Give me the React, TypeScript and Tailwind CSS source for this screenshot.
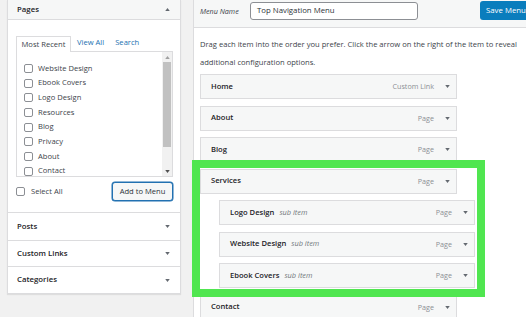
import React from 'react';

const pages = ['Website Design', 'Ebook Covers', 'Logo Design', 'Resources', 'Blog', 'Privacy', 'About', 'Contact'];

const menuTop = [
  { title: 'Home', type: 'Custom Link' },
  { title: 'About', type: 'Page' },
  { title: 'Blog', type: 'Page' },
  { title: 'Services', type: 'Page' },
];

const subItems = ['Logo Design', 'Website Design', 'Ebook Covers'];

function Arrow({ up = false }: { up?: boolean }) {
  return (
    <svg width="5" height="3" viewBox="0 0 6 4" className="shrink-0">
      <polygon points={up ? '0,4 6,4 3,0' : '0,0 6,0 3,4'} fill="#646970" />
    </svg>
  );
}

function Checkbox() {
  return <span className="w-[9px] h-[9px] rounded-[2px] border border-[#8c8f94] bg-white shrink-0" />;
}

function MenuItem({ title, type, sub = false }: { title: string; type: string; sub?: boolean }) {
  return (
    <div
      className={`h-[25px] shrink-0 flex items-center border border-[#dcdcde] bg-[#f6f7f7] pl-[10px] pr-[6px] ${
        sub ? 'ml-[19px] w-[256px]' : 'w-[257px]'
      }`}
    >
      <span className="text-[7.6px] font-semibold text-[#1d2327]">{title}</span>
      {sub && <span className="ml-[5px] text-[7.4px] italic text-[#72777c]">sub item</span>}
      <span className="ml-auto text-[7.2px] text-[#8c8f94]">{type}</span>
      <span className="ml-[11px] flex items-center">
        <Arrow />
      </span>
    </div>
  );
}

function Section({ title, h }: { title: string; h: string }) {
  return (
    <div className={`${h} border-t border-[#dcdcde] flex items-center justify-between pl-[9px] pr-[10px]`}>
      <span className="text-[7.8px] font-semibold text-[#1d2327]">{title}</span>
      <Arrow />
    </div>
  );
}

export default function App() {
  return (
    <div className="relative w-[526px] h-[317px] overflow-hidden bg-[#f1f1f1] flex font-['Open_Sans',sans-serif] text-[#3c434a]">
      {/* Left column */}
      <div className="pl-[7px] w-[181px] shrink-0">
        <div className="w-[174px] bg-white border border-t-0 border-[#dcdcde] shadow-[0_1px_1px_rgba(0,0,0,0.08)]">
          <div className="h-[20px] bg-[#f6f7f7] border-b border-[#dcdcde] flex items-center justify-between pl-[9px] pr-[10px]">
            <span className="text-[7.8px] font-semibold text-[#1d2327]">Pages</span>
            <Arrow up />
          </div>

          <div className="pt-[15px] pl-[8px] pr-[7px] pb-[11px]">
            {/* Tabs */}
            <div className="flex items-end h-[16px]">
              <div className="h-[16px] w-[55px] border border-b-0 border-[#dcdcde] bg-white relative top-[1px] flex items-center justify-center text-[7.6px] text-[#3c434a]">
                Most Recent
              </div>
              <span className="ml-[6px] pb-[3px] text-[7.6px] text-[#2271b1]">View All</span>
              <span className="ml-[11px] pb-[3px] text-[7.6px] text-[#2271b1]">Search</span>
            </div>

            {/* List box */}
            <div className="h-[126px] border border-[#dcdcde] bg-white flex overflow-hidden">
              <div className="flex-1 pt-[9px] pl-[7px]">
                {pages.map((p) => (
                  <div key={p} className="h-[14.7px] flex items-center gap-[5px]">
                    <Checkbox />
                    <span className="text-[7.6px] text-[#3c434a]">{p}</span>
                  </div>
                ))}
              </div>
              <div className="w-[10px] bg-[#f1f1f1] flex flex-col items-center">
                <div className="h-[10px] flex items-center">
                  <svg width="5" height="3" viewBox="0 0 6 4">
                    <polygon points="0,4 6,4 3,0" fill="#a0a0a0" />
                  </svg>
                </div>
                <div className="w-[8px] h-[85px] bg-[#c1c1c1]" />
                <div className="flex-1" />
                <div className="h-[10px] flex items-center">
                  <svg width="5" height="3" viewBox="0 0 6 4">
                    <polygon points="0,0 6,0 3,4" fill="#505050" />
                  </svg>
                </div>
              </div>
            </div>

            {/* Select all + button */}
            <div className="mt-[5px] flex items-center justify-between">
              <div className="flex items-center gap-[6px] pt-[1px]">
                <Checkbox />
                <span className="text-[7.6px] text-[#3c434a]">Select All</span>
              </div>
              <button className="h-[19px] w-[61px] rounded-[3px] border border-[#2271b1] bg-[#f6f7f7] text-[7.6px] text-[#2c3338] shadow-[0_0_0_0.5px_#2271b1]">
                Add to Menu
              </button>
            </div>
          </div>

          <Section title="Posts" h="h-[28px]" />
          <Section title="Custom Links" h="h-[26px]" />
          <Section title="Categories" h="h-[27px]" />
        </div>
      </div>

      {/* Right column */}
      <div className="ml-[12px] flex-1 bg-white border-l border-[#dcdcde] flex flex-col">
        <div className="h-[28px] shrink-0 bg-[#f6f7f7] border-b border-[#dcdcde] flex items-start pl-[6px]">
          <span className="mt-[6px] w-[43px] whitespace-nowrap text-[7.2px] italic text-[#3c434a]">Menu Name</span>
          <div className="ml-[7px] mt-[2px] h-[18px] w-[168px] rounded-[3px] border border-[#8c8f94] bg-white flex items-center pl-[6px] text-[7.8px] text-[#2c3338]">
            Top Navigation Menu
          </div>
          <button className="ml-[62px] mt-[1px] h-[19px] w-[60px] shrink-0 rounded-[3px] bg-[#0a7dbd] text-white text-[7.8px] text-left pl-[6px] whitespace-nowrap">
            Save Menu
          </button>
        </div>

        <div className="pl-[6px] pt-[7px]">
          <p className="text-[7.6px] leading-[18px] text-[#3c434a] w-[330px]">
            Drag each item into the order you prefer. Click the arrow on the right of the item to reveal additional
            configuration options.
          </p>

          <div className="mt-[3px] flex flex-col gap-[6.5px]">
            {menuTop.map((m) => (
              <MenuItem key={m.title} title={m.title} type={m.type} />
            ))}
            {subItems.map((s) => (
              <MenuItem key={s} title={s} type="Page" sub />
            ))}
            <MenuItem title="Contact" type="Page" />
          </div>
        </div>
      </div>

      {/* Highlight annotation */}
      <div className="absolute left-[192px] top-[160px] w-[293px] h-[137px] border-[8px] border-[#50e650] pointer-events-none" />
    </div>
  );
}
